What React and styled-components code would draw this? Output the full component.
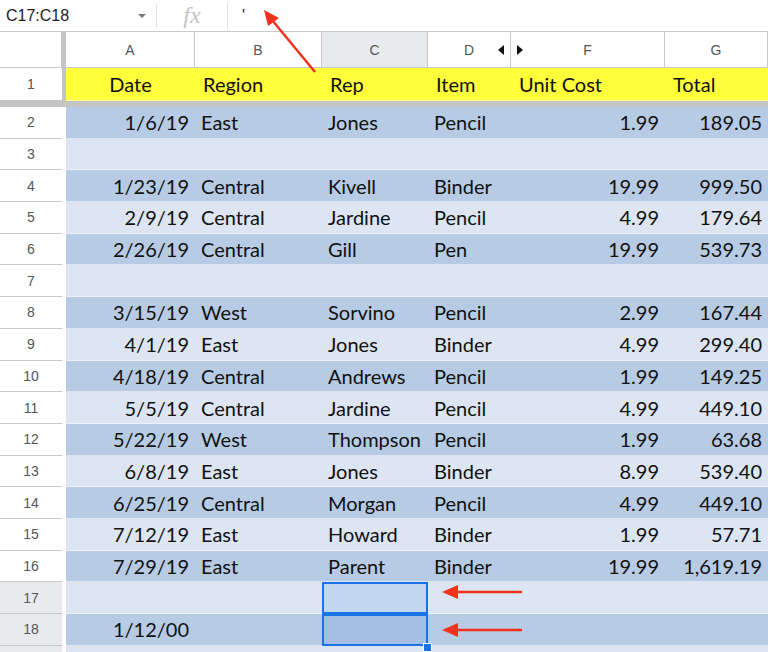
import React from "react";
import styled, { createGlobalStyle } from "styled-components";

const Global = createGlobalStyle`
  body { margin: 0; background: #fff; font-family: Lato, "Open Sans", sans-serif; }
`;

const cols = "62px 4px 129px 127px 106px 83px 154px 103px";

const rows = [
  ["1/6/19", "East", "Jones", "Pencil", "1.99", "189.05"],
  [],
  ["1/23/19", "Central", "Kivell", "Binder", "19.99", "999.50"],
  ["2/9/19", "Central", "Jardine", "Pencil", "4.99", "179.64"],
  ["2/26/19", "Central", "Gill", "Pen", "19.99", "539.73"],
  [],
  ["3/15/19", "West", "Sorvino", "Pencil", "2.99", "167.44"],
  ["4/1/19", "East", "Jones", "Binder", "4.99", "299.40"],
  ["4/18/19", "Central", "Andrews", "Pencil", "1.99", "149.25"],
  ["5/5/19", "Central", "Jardine", "Pencil", "4.99", "449.10"],
  ["5/22/19", "West", "Thompson", "Pencil", "1.99", "63.68"],
  ["6/8/19", "East", "Jones", "Binder", "8.99", "539.40"],
  ["6/25/19", "Central", "Morgan", "Pencil", "4.99", "449.10"],
  ["7/12/19", "East", "Howard", "Binder", "1.99", "57.71"],
  ["7/29/19", "East", "Parent", "Binder", "19.99", "1,619.19"],
  [],
  ["1/12/00"],
  [],
];

const Page = styled.div`
  position: relative;
  width: 768px;
  height: 652px;
  overflow: hidden;
`;

const FormulaBar = styled.div`
  display: flex;
  align-items: center;
  height: 31px;
  border-bottom: 1px solid #c8c8c8;
  font-family: "Liberation Sans", sans-serif;
  font-size: 16px;
  color: #222;
`;

const NameBox = styled.div`
  width: 157px;
  box-sizing: border-box;
  padding: 0 10px 0 6px;
  display: flex;
  justify-content: space-between;
  align-items: center;
  border-right: 1px solid #e2e2e2;
  height: 24px;
`;

const Caret = styled.span`
  width: 0;
  height: 0;
  border-left: 4px solid transparent;
  border-right: 4px solid transparent;
  border-top: 4px solid #777;
`;

const Fx = styled.div`
  width: 70px;
  text-align: center;
  font-family: "Liberation Serif", serif;
  font-style: italic;
  font-size: 24px;
  color: #c4c4c4;
  border-right: 1px solid #e2e2e2;
  height: 26px;
  line-height: 24px;
`;

const Formula = styled.div`
  padding-left: 14px;
`;

const Grid = styled.div`
  display: grid;
  grid-template-columns: ${cols};
`;

const ColHead = styled.div`
  height: 36px;
  display: flex;
  align-items: center;
  justify-content: center;
  gap: 30px;
  font-family: "Liberation Sans", sans-serif;
  font-size: 14px;
  color: #555;
  background: ${(p) => (p.$active ? "#e8eaed" : "#fff")};
  border-right: 1px solid #c8c8c8;
  border-bottom: 1px solid #c8c8c8;
  box-sizing: border-box;
  position: relative;
`;

const Freeze = styled.div`
  background: ${(p) => (p.$blank ? "#fff" : "#c4c4c4")};
  grid-column: ${(p) => p.$span || "auto"};
  height: ${(p) => (p.$h ? p.$h + "px" : "auto")};
`;

const RowNum = styled.div`
  height: ${(p) => p.$h}px;
  display: flex;
  align-items: center;
  justify-content: center;
  font-family: "Liberation Sans", sans-serif;
  font-size: 14px;
  color: #555;
  background: ${(p) => (p.$active ? "#e8eaed" : "#fff")};
  border-bottom: 1px solid #c8c8c8;
  box-sizing: border-box;
`;

const Cell = styled.div`
  height: ${(p) => p.$h}px;
  box-sizing: border-box;
  padding: 0 ${(p) => (p.$head ? "8px" : "6px")};
  display: flex;
  align-items: center;
  justify-content: ${(p) => p.$align};
  font-size: 20px;
  color: #111;
  white-space: nowrap;
  background: ${(p) => p.$bg};
  border-bottom: 1px solid rgba(255, 255, 255, 0.5);
  position: relative;
  ${(p) => p.$sel && `outline: 2px solid #1a73e8; outline-offset: -2px; background: ${p.$dark ? "#a3c0e4" : "#c2d6ee"};`}
`;

const Handle = styled.span`
  position: absolute;
  right: -4px;
  bottom: -7px;
  width: 7px;
  height: 7px;
  background: #1a73e8;
  border: 1px solid #fff;
  z-index: 2;
`;

const Tri = styled.span`
  position: absolute;
  top: 13px;
  ${(p) => (p.$left ? "right: 6px;" : "left: 6px;")}
  width: 0;
  height: 0;
  border-top: 5px solid transparent;
  border-bottom: 5px solid transparent;
  ${(p) => (p.$left ? "border-right: 6px solid #111;" : "border-left: 6px solid #111;")}
`;

const Arrows = styled.svg`
  position: absolute;
  left: 0;
  top: 0;
  pointer-events: none;
`;

const align = ["flex-end", "flex-start", "flex-start", "flex-start", "flex-end", "flex-end"];

export default function App() {
  const letters = ["A", "B", "C", "D", "F", "G"];
  return (
    <Page>
      <Global />
      <FormulaBar>
        <NameBox>C17:C18<Caret /></NameBox>
        <Fx>fx</Fx>
        <Formula>'</Formula>
      </FormulaBar>
      <Grid>
        <ColHead />
        <Freeze />
        {letters.map((l) => (
          <ColHead key={l} $active={l === "C"}>
            {l === "F" && <Tri />}
            {l}
            {l === "D" && <Tri $left />}
          </ColHead>
        ))}
        <RowNum $h={33}>1</RowNum>
        <Freeze />
        {["Date", "Region", "Rep", "Item", "Unit Cost", "Total"].map((t, i) => (
          <Cell key={t} $head $h={33} $bg="#ffff3b" $align={i === 0 ? "center" : "flex-start"}>{t}</Cell>
        ))}
        <Freeze $span="1 / -1" $h={6} />
        {rows.map((r, ri) => {
          const n = ri + 2;
          const dark = n % 2 === 0;
          const bg = dark ? "#b7cce4" : "#dce5f1";
          return (
            <React.Fragment key={n}>
              <RowNum $h={31.7} $active={n >= 17}>{n}</RowNum>
              <Freeze $blank />
              {align.map((a, ci) => (
                <Cell key={ci} $h={31.7} $bg={bg} $align={a}
                  $sel={ci === 2 && (n === 17 || n === 18)} $dark={dark}>
                  {r[ci] || ""}
                  {ci === 2 && n === 18 && <Handle />}
                </Cell>
              ))}
            </React.Fragment>
          );
        })}
      </Grid>
      <Arrows width="768" height="652">
        <g stroke="#f0321e" strokeWidth="2.5" fill="#f0321e">
          <line x1="315" y1="72" x2="272" y2="20" />
          <polygon points="264,10 268,26 279,18" stroke="none" />
          <line x1="522" y1="592" x2="456" y2="592" />
          <polygon points="442,592 458,585 458,599" stroke="none" />
          <line x1="522" y1="630" x2="456" y2="630" />
          <polygon points="442,630 458,623 458,637" stroke="none" />
        </g>
      </Arrows>
    </Page>
  );
}
